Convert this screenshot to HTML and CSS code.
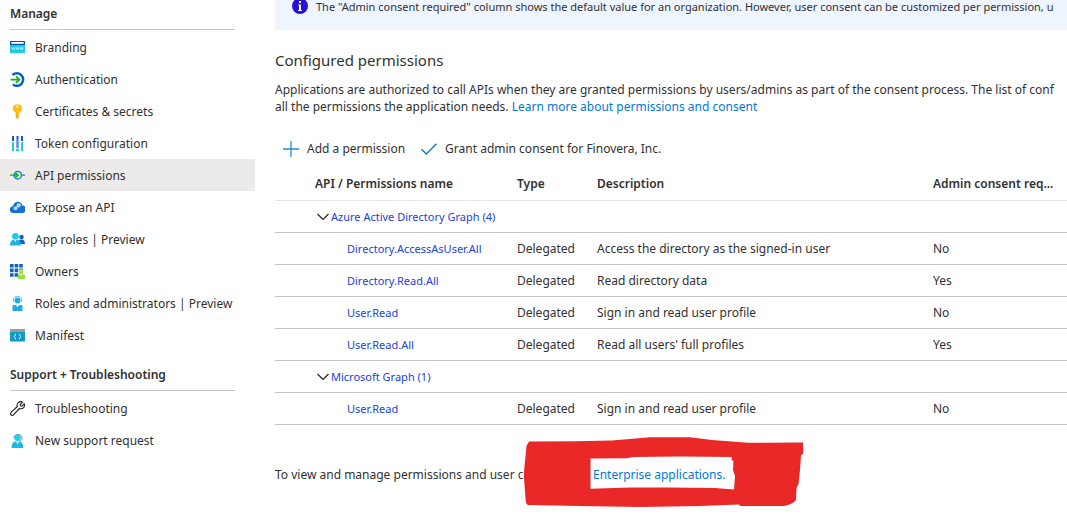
FILE: index.html
```html
<!DOCTYPE html>
<html lang="en">
<head>
    <meta charset="UTF-8">
    <title>API permissions</title>
    <meta name="viewport" content="width=device-width, initial-scale=1.0">
    <link rel="stylesheet" href="styles.css">
</head>
<body>
    <nav class="sidebar">
        <h2 class="menu-title">Manage</h2>
        <ul class="menu">
            <li><a href="#">
                <svg class="icon" viewBox="0 0 15 15">
                    <rect y="1" width="15" height="12" rx="0.6" fill="#18cdea"/>
                    <rect y="1" width="15" height="4" rx="0.6" fill="#0b4f9e"/>
                    <rect x="1.3" y="2" width="12.4" height="1.8" fill="#fff"/>
                    <path d="M2 7.4l.8 2 .8-2 .8 2 .8-2M6 7.4l.8 2 .8-2 .8 2 .8-2M10 7.4l.8 2 .8-2 .8 2 .8-2" fill="none" stroke="#d5fbff" stroke-width=".7"/>
                </svg>
                Branding</a></li>
            <li><a href="#">
                <svg class="icon" viewBox="0 0 15 15">
                    <path d="M2.5 3A6.3 6.3 0 1 1 2.8 12.400" fill="none" stroke="#0c62c4" stroke-width="2.5"/>
                    <path d="M0.5 7.6h8.6M6 4.300l3.4 3.300L6 10.900" fill="none" stroke="#14b31b" stroke-width="1.8"/>
                </svg>
                Authentication</a></li>
            <li><a href="#">
                <svg class="icon" viewBox="0 0 15 15">
                    <path d="M7.3 0.3c2.8 0 4.8 1.8 4.8 4.3 0 1.8-1 3.1-2.5 3.8v.9l-1 1 1 1-1 1 .9.9-2.2 2-1.7-1.6V8.4C3.8 7.7 2.7 6.4 2.7 4.6c0-2.5 1.9-4.3 4.6-4.3z" fill="#fdc010"/>
                    <circle cx="7.3" cy="2.6" r="1.1" fill="#fff3c2"/>
                    <path d="M6.7 9v4" stroke="#e59b00" stroke-width=".8"/>
                </svg>
                Certificates &amp; secrets</a></li>
            <li><a href="#">
                <svg class="icon" viewBox="0 0 15 15">
                    <path d="M3 0v5M12 0v5M7.5 0v12" stroke="#0b5cc4" stroke-width="2"/>
                    <path d="M3 6.3V15M12 6.3V15" stroke="#18cdea" stroke-width="2"/>
                    <path d="M7.5 3v9" stroke="#3696e0" stroke-width="1"/>
                    <path d="M7.5 12.8V15" stroke="#18cdea" stroke-width="3"/>
                </svg>
                Token configuration</a></li>
            <li><a class="active" href="#">
                <svg class="icon" viewBox="0 0 15 15">
                    <circle cx="7.8" cy="7.2" r="3.7" fill="none" stroke="#1490b8" stroke-width="1.5"/>
                    <path d="M11.4 7.2H15" stroke="#1490b8" stroke-width="1.4"/>
                    <path d="M0 7.2h7M6 5.3l2.2 1.9L6 9.1z" fill="#13b51a" stroke="#13b51a" stroke-width="1.3"/>
                </svg>
                API permissions</a></li>
            <li><a href="#">
                <svg class="icon" viewBox="0 0 15 15">
                    <path d="M3.4 13A3.4 3.4 0 0 1 3 6.2C3.4 3.6 5.4 1.8 7.8 1.8c2.3 0 4 1.3 4.6 3.6A3.8 3.8 0 0 1 11.6 13z" fill="#1670d6"/>
                    <circle cx="5.5" cy="8.3" r="1.8" fill="#c2dcf7" stroke="#8fc0f2" stroke-width=".6"/>
                    <circle cx="8.7" cy="5.3" r="1.8" fill="#a9cdf4" stroke="#d6e8fa" stroke-width=".7"/>
                    <path d="M6 8l2.2-2" stroke="#fff" stroke-width=".8"/>
                </svg>
                Expose an API</a></li>
            <li><a href="#">
                <svg class="icon" viewBox="0 0 15 15">
                    <circle cx="11.5" cy="5" r="2.3" fill="#1464c8"/>
                    <path d="M8 12c0-3 1-4.5 3.5-4.5S15 9 15 12z" fill="#1464c8"/>
                    <circle cx="5.4" cy="4.3" r="3.3" fill="#20c9ec"/>
                    <path d="M0 13.5C0 9.5 1.7 7.5 5.4 7.5s5.4 2 5.4 6z" fill="#1fb5df"/>
                    <path d="M4 7.6h2.8L5.4 10z" fill="#fff"/>
                </svg>
                App roles | Preview</a></li>
            <li><a href="#">
                <svg class="icon" viewBox="0 0 15 15">
                    <path d="M0 0h3.6v3.6H0zM4.6 0h3.6v3.6H4.6zM9.2 0h3.6v3.6H9.2zM0 4.6h3.6v3.6H0zM4.6 4.6h3.6v3.6H4.6zM9.2 4.6h3.6v3.6H9.2zM0 9.2h3.6v3.6H0zM4.6 9.2h3.6v3.6H4.6z" fill="#0f62be"/>
                    <circle cx="11.2" cy="8" r="2.4" fill="#9be236" stroke="#fff" stroke-width=".5"/>
                    <path d="M7.5 15v-3.2c0-1 .6-1.6 1.6-1.6h4.3c1 0 1.6.6 1.6 1.6V15z" fill="#9be236"/>
                    <path d="M10.2 10.2h2l-1 1.6z" fill="#fff"/>
                </svg>
                Owners</a></li>
            <li><a href="#">
                <svg class="icon" viewBox="0 0 15 15">
                    <circle cx="7.5" cy="4.5" r="3" fill="#20aedb"/>
                    <path d="M3.3 6V4.3a4.2 4 0 0 1 8.4 0V6" fill="none" stroke="#6cc6dd" stroke-width="1.1"/>
                    <path d="M2.5 15V9h10v6z" fill="#20aedb"/>
                    <path d="M5.6 8.5h3.8L7.5 11.2z" fill="#fff"/>
                </svg>
                Roles and administrators | Preview</a></li>
            <li><a href="#">
                <svg class="icon" viewBox="0 0 15 15">
                    <path d="M0 1h15v3H0z" fill="#9d9d9d"/>
                    <path d="M0 4h15v9.5H0z" fill="#119ac6"/>
                    <path d="M6 6c-1.3 0-.6 1.9-1.6 2.5 1 .6.3 2.6 1.6 2.6M9 6c1.3 0 .6 1.9 1.6 2.5-1 .6-.3 2.6-1.6 2.6" fill="none" stroke="#fff" stroke-width=".9"/>
                </svg>
                Manifest</a></li>
        </ul>
        <h2 class="menu-title">Support + Troubleshooting</h2>
        <ul class="menu">
            <li><a href="#">
                <svg class="icon" viewBox="0 0 15 15">
                    <path d="M12.6 1.1 10.2 3.4l.3 1.4 1.4.3 2.3-2.3c1 2.4-.7 5-3.3 5-.6 0-1-.1-1.5-.3l-6 6.4C2.4 15 .5 14 .6 12.5c0-.5.2-.9.5-1.2L7.3 5.5C6.3 2.7 9.3-.4 12.6 1.1z" fill="none" stroke="#222" stroke-width="1.1"/>
                </svg>
                Troubleshooting</a></li>
            <li><a href="#">
                <svg class="icon" viewBox="0 0 15 15">
                    <path d="M4 5V4a4.2 3.8 0 0 1 8 0v2.5L9.5 8" fill="none" stroke="#8a8a8a" stroke-width="1"/>
                    <circle cx="7.5" cy="4.8" r="3.3" fill="#22cdf0"/>
                    <path d="M1.5 15C1.5 10.5 3.5 8.5 5.5 8.5h4c2 0 3.8 2 3.8 6.5z" fill="#1cb8e0"/>
                    <path d="M6 8.5h3l-1.5 3z" fill="#d9f6fc"/>
                </svg>
                New support request</a></li>
        </ul>
    </nav>

    <main class="content">
        <div class="banner">
            <svg class="info" viewBox="0 0 16 16">
                <circle cx="8" cy="8" r="8" fill="#2412d6"/>
                <path d="M7 3h2v2H7zM6.2 6.5H9V12h1v1H6.2v-1H7V7.5h-.8z" fill="#fff"/>
            </svg>
            <span>The "Admin consent required" column shows the default value for an organization. However, user consent can be customized per permission, u</span>
        </div>

        <h1>Configured permissions</h1>
        <p class="intro">Applications are authorized to call APIs when they are granted permissions by users/admins as part of the consent process. The list of conf<br>
            all the permissions the application needs. <a href="#">Learn more about permissions and consent</a></p>

        <div class="toolbar">
            <button type="button">
                <svg viewBox="0 0 16 16"><path d="M8 0v16M0 8h16" stroke="#2b8bdb" stroke-width="1.3"/></svg>
                Add a permission
            </button>
            <button type="button">
                <svg viewBox="0 0 16 16"><path d="M.5 8.2l4.8 4.8L15.5 2.8" fill="none" stroke="#0f78d4" stroke-width="1.4"/></svg>
                Grant admin consent for Finovera, Inc.
            </button>
        </div>

        <table class="permissions">
            <thead>
                <tr>
                    <th class="col-name">API / Permissions name</th>
                    <th class="col-type">Type</th>
                    <th>Description</th>
                    <th class="col-admin">Admin consent req...</th>
                </tr>
            </thead>
            <tbody>
                <tr class="group">
                    <td colspan="4"><svg class="chevron" viewBox="0 0 12 12"><path d="M.5 3L6 8.5 11.5 3" fill="none" stroke="#222" stroke-width="1.2"/></svg><a href="#">Azure Active Directory Graph (4)</a></td>
                </tr>
                <tr>
                    <td class="name"><a href="#">Directory.AccessAsUser.All</a></td>
                    <td>Delegated</td>
                    <td>Access the directory as the signed-in user</td>
                    <td>No</td>
                </tr>
                <tr>
                    <td class="name"><a href="#">Directory.Read.All</a></td>
                    <td>Delegated</td>
                    <td>Read directory data</td>
                    <td>Yes</td>
                </tr>
                <tr>
                    <td class="name"><a href="#">User.Read</a></td>
                    <td>Delegated</td>
                    <td>Sign in and read user profile</td>
                    <td>No</td>
                </tr>
                <tr>
                    <td class="name"><a href="#">User.Read.All</a></td>
                    <td>Delegated</td>
                    <td>Read all users' full profiles</td>
                    <td>Yes</td>
                </tr>
                <tr class="group">
                    <td colspan="4"><svg class="chevron" viewBox="0 0 12 12"><path d="M.5 3L6 8.5 11.5 3" fill="none" stroke="#222" stroke-width="1.2"/></svg><a href="#">Microsoft Graph (1)</a></td>
                </tr>
                <tr>
                    <td class="name"><a href="#">User.Read</a></td>
                    <td>Delegated</td>
                    <td>Sign in and read user profile</td>
                    <td>No</td>
                </tr>
            </tbody>
        </table>

        <p class="footer-note">To view and manage permissions and user consents, try <a href="#">Enterprise applications.</a>
            <svg class="marker" viewBox="520 435 290 75">
                <path fill-rule="evenodd" fill="#ea2828" d="M529 441.5L576 441.3 612 440.5 650 437.3 690 437.2 712 440 748 442.7 803 442.5 803.3 453.5 801 455.5 800 470 798.5 484 796.5 488 796 500Q793 504 784 506L740 506 739 504.5 700 506 640 507 580 506 528 505Q525.5 504 525.5 499L523.8 475 524.5 466 526.5 446ZM590.5 458.5L627 458.3 633 457 680 456.5 732 457 731.5 460 733.5 461 733 470 735 476 734 489.5 715 488 670 487.5 630 487.5 590.5 488.7Z"/>
            </svg>
        </p>
    </main>
</body>
</html>
```
FILE: styles.css
```css
* {
    box-sizing: border-box;
}
body {
    margin: 0;
    min-height: 100vh;
    display: flex;
    background: #fff;
    color: #323130;
    font-family: "Segoe UI", "Noto Sans", sans-serif;
    font-size: 12px;
    line-height: 17px;
}
a {
    color: #0078d4;
    text-decoration: none;
}

/* Sidebar */
.sidebar {
    width: 255px;
    flex-shrink: 0;
}
.menu-title {
    margin: 0 20px 1px 10px;
    padding: 5px 0 7px;
    border-bottom: 1px solid #c8c6c4;
    font-size: 12px;
    font-weight: 600;
}
.menu {
    margin: 0;
    padding: 0;
    list-style: none;
}
.menu + .menu-title {
    padding-top: 15px;
}
.menu a {
    display: flex;
    align-items: center;
    gap: 10px;
    height: 32px;
    padding-left: 10px;
    color: #323130;
}
.menu a.active {
    background: #edebe9;
}
.icon {
    width: 15px;
    height: 15px;
}

/* Content */
.content {
    flex: 1;
    min-width: 0;
    padding-left: 20px;
    overflow: hidden;
    white-space: nowrap;
}
.banner {
    display: flex;
    align-items: center;
    gap: 8px;
    height: 30px;
    padding: 0 0 18px 17px;
    background: #eef5ff;
    border-radius: 0 0 0 3px;
    font-size: 11px;
}
.info {
    width: 16px;
    height: 16px;
    flex-shrink: 0;
}
h1 {
    margin: 20px 0 10px;
    font-size: 15px;
    font-weight: 400;
    line-height: 21px;
}
.intro {
    margin: 0;
}
.toolbar {
    display: flex;
    gap: 16px;
    padding: 25px 0 10px 8px;
}
.toolbar button {
    display: flex;
    align-items: center;
    gap: 8px;
    padding: 0;
    border: none;
    background: none;
    color: inherit;
    font: inherit;
    cursor: pointer;
}
.toolbar svg {
    width: 16px;
    height: 16px;
}

/* Permissions table */
.permissions {
    width: 100%;
    border-collapse: collapse;
    table-layout: fixed;
}
.permissions th,
.permissions td {
    height: 32px;
    padding: 0;
    border-bottom: 1px solid #c8c6c4;
    text-align: left;
    font-weight: 400;
}
.permissions th {
    height: 33px;
    border-bottom-color: #e6e6e6;
    font-weight: 600;
}
.permissions th.col-name {
    width: 242px;
    padding-left: 40px;
}
.col-type {
    width: 80px;
}
.col-admin {
    width: 134px;
}
.permissions a {
    color: #2140dc;
    font-size: 11px;
}
.permissions .group td {
    padding-left: 42px;
}
.permissions td.name {
    padding-left: 72px;
}
.chevron {
    width: 12px;
    height: 12px;
    margin-right: 2px;
    vertical-align: middle;
}

.footer-note {
    position: relative;
    margin: 41px 0 0;
}
.marker {
    position: absolute;
    left: 245px;
    top: -31px;
    width: 290px;
    height: 75px;
    pointer-events: none;
}
```
